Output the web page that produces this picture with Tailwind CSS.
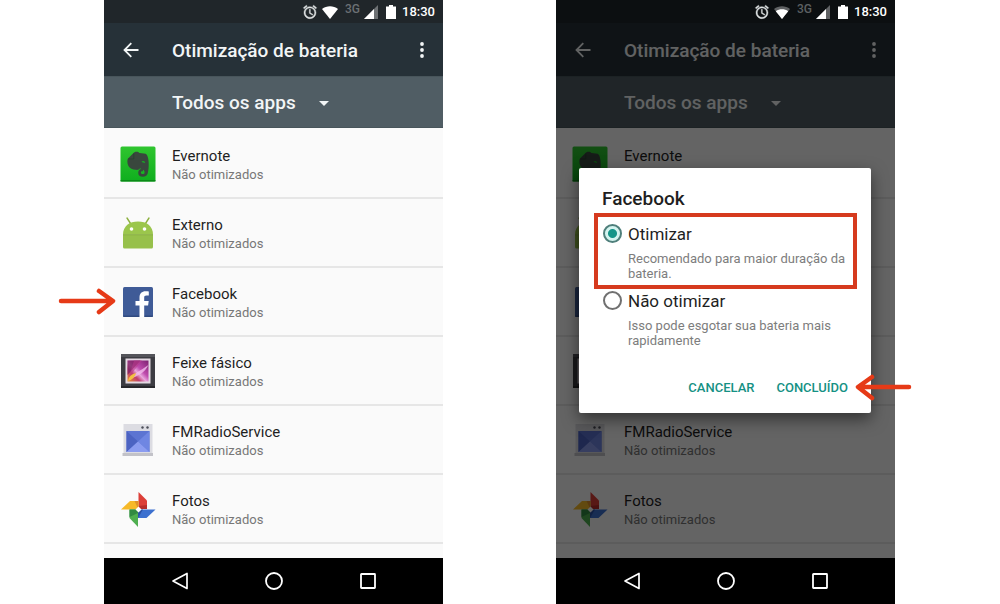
<!DOCTYPE html>
<html lang="pt-BR">
<head>
<meta charset="utf-8">
<meta name="viewport" content="width=device-width, initial-scale=1">
<title>Otimização de bateria</title>
<script src="https://cdn.jsdelivr.net/npm/@tailwindcss/browser@4"></script>
</head>
<body class="bg-white font-['Roboto',sans-serif]">

<!-- Icon library -->
<svg width="0" height="0" class="absolute" aria-hidden="true">
  <defs>
    <linearGradient id="everBg" x1="0" y1="0" x2="0" y2="1"><stop offset="0" stop-color="#2fc52f"/><stop offset="1" stop-color="#0fae1e"/></linearGradient>
    <linearGradient id="photoBg" x1="0" y1="1" x2="1" y2="0"><stop offset="0" stop-color="#e8932e"/><stop offset=".3" stop-color="#c03c6e"/><stop offset=".45" stop-color="#e9a6dc"/><stop offset=".6" stop-color="#c04cae"/><stop offset="1" stop-color="#7c2170"/></linearGradient>
    <symbol id="i-alarm" viewBox="0 0 24 24"><path fill="currentColor" d="M22 5.72l-4.6-3.86-1.29 1.53 4.6 3.86L22 5.72zM7.88 3.39L6.6 1.86 2 5.71l1.29 1.53 4.59-3.85zM12.5 8H11v6l4.75 2.85.75-1.23-4-2.37V8zM12 4c-4.97 0-9 4.03-9 9s4.02 9 9 9a9 9 0 0 0 0-18zm0 16c-3.87 0-7-3.13-7-7s3.13-7 7-7 7 3.13 7 7-3.13 7-7 7z" stroke="currentColor" stroke-width=".6"/></symbol>
    <symbol id="i-wifi" viewBox="0 0 16 13"><path fill="currentColor" d="M0 3C4.500-.6 11.500-.6 16 3L8 13z"/></symbol>
    <symbol id="i-wifi-mid" viewBox="0 0 16 13"><path fill="currentColor" opacity=".35" d="M0 3C4.500-.6 11.500-.6 16 3L8 13z"/><path fill="currentColor" d="M1.800 5.200C5.500 2.600 10.500 2.600 14.200 5.200L8 13z"/></symbol>
    <symbol id="i-signal" viewBox="0 0 14 14"><path fill="currentColor" opacity=".35" d="M14 0V14H0z"/><path fill="currentColor" d="M10 4V14H0z"/></symbol>
    <symbol id="i-battery" viewBox="0 0 10 14"><path fill="currentColor" d="M3 0h4v1.500h3V14H0V1.500h3z"/></symbol>
    <symbol id="i-back" viewBox="0 0 16 16"><path fill="none" stroke="currentColor" stroke-width="1.800" d="M15.500 8H2M8.300 1.200L1.500 8l6.800 6.800"/></symbol>
    <symbol id="i-more" viewBox="0 0 4 16"><g fill="currentColor"><circle cx="2" cy="2" r="1.900"/><circle cx="2" cy="8" r="1.900"/><circle cx="2" cy="14" r="1.900"/></g></symbol>
    <symbol id="n-back" viewBox="0 0 18 18"><path fill="none" stroke="currentColor" stroke-width="1.700" stroke-linejoin="round" d="M16 1.500V16.500L2 9z"/></symbol>
    <symbol id="n-home" viewBox="0 0 18 18"><circle cx="9" cy="9" r="8" fill="none" stroke="currentColor" stroke-width="1.800"/></symbol>
    <symbol id="n-recent" viewBox="0 0 18 18"><rect x="2" y="2" width="14" height="14" rx=".5" fill="none" stroke="currentColor" stroke-width="1.800"/></symbol>

    <symbol id="a-evernote" viewBox="0 0 36 36">
      <rect x=".5" y=".5" width="35" height="35" rx="1.500" fill="url(#everBg)"/>
      <path d="M.5 34h35v1.500H.5z" fill="#0a8a17"/>
      <path fill="#39473d" d="M8 12.500L13.500 7c1.600-1.800 4.600-1.700 6 .1 3 .2 6 .3 7.300 1.700 2.200 3.300 2.600 12.700.9 18.700-.8 2.400-2.500 3.200-4.800 3.200-3.100 0-4.700-1.600-4.700-4 0-2.700 2-4 4.700-3.900v2.500c-1.300-.2-2 .3-2 1.200 0 1.100.8 1.600 1.900 1.600 1.600 0 2-1 1.700-2.600-.5-2-2.800-2-4.500-3.200-.8 1.500-2.300 1.900-4.500 1.500C10 23.200 8 20.500 7.500 17c-.2-2-.2-3.500.5-4.500z"/>
      <path fill="#17ae25" d="M21.500 16c.8-1.700 3.500-1.500 3.700 1-1.400-.6-2.500-.7-3.700-1z"/>
      <path d="M8.300 13h5.500V7.500" fill="none" stroke="#26402d" stroke-width=".8"/>
    </symbol>
    <symbol id="a-android" viewBox="0 0 36 36">
      <path stroke="#8db13f" stroke-width="1.400" stroke-linecap="round" d="M7 3l4.500 7M29 3l-4.500 7"/>
      <path fill="#9bc64c" d="M3 19.500C3 11 9.500 6.500 18 6.500S33 11 33 19.500z"/>
      <path fill="#97c04b" d="M3 19.500h30V32a1.500 1.500 0 0 1-1.500 1.500h-27A1.500 1.500 0 0 1 3 32z"/>
      <path fill="#86ad40" d="M3 19.300h30v1H3z"/>
      <circle cx="11.500" cy="14" r="1.800" fill="#fff"/><circle cx="24.500" cy="14" r="1.800" fill="#fff"/>
    </symbol>
    <symbol id="a-facebook" viewBox="0 0 36 36">
      <rect x="3" y="3" width="30" height="30" rx="1.500" fill="#3f5b97"/>
      <path d="M3 31.500h30v.5a1 1 0 0 1-1 1H4a1 1 0 0 1-1-1z" fill="#304a80"/>
      <path fill="#fff" d="M19.500 33V21.500h-4V17h4v-3.500c0-4 2.400-6.200 6-6.200 1.600 0 2.700.1 3.300.2v4h-2.300c-1.900 0-2.300.9-2.300 2.200V17h4.500l-.6 4.500h-3.900V33z"/>
    </symbol>
    <symbol id="a-gallery" viewBox="0 0 36 36">
      <rect x="1" y="1" width="34" height="34" fill="#3c3c42"/>
      <path d="M1 1h34v3H1z" fill="#54545a"/><path d="M1 33h34v2H1z" fill="#28282c"/>
      <rect x="5.500" y="5.500" width="25" height="25" fill="#e3d9e2"/>
      <rect x="7.500" y="7.500" width="21" height="21" fill="url(#photoBg)"/>
      <path d="M7.500 7.500h13L7.500 22z" fill="#7d2064" opacity=".8"/>
      <path d="M14 7.500h8L9 24z" fill="#b83a8c" opacity=".6"/>
      <path d="M10 26c4-6 10-8 18.500-14-4 8-11 11-18.500 14z" fill="#f3bdec" opacity=".8"/>
      <path d="M8 28c1-5 4-7 8-8-1 4-4 7-8 8z" fill="#f2c043"/>
    </symbol>
    <symbol id="a-radio" viewBox="0 0 36 36">
      <path fill="#dcdce2" d="M3.500 2h29v30h-29z"/><path fill="#c2c2c8" d="M2.500 31h30.500v3H2.500z"/>
      <circle cx="22.500" cy="5.500" r="1.200" fill="#4a4d57"/><circle cx="27.500" cy="5.500" r="1.200" fill="#4a4d57"/>
      <path fill="#5c74d2" d="M6.500 9h23v21h-23z"/><path fill="#4c63c2" d="M6.500 9L18 19.500 6.500 30z"/><path fill="#6f86e2" d="M29.500 9v21L18 19.500z"/><path fill="#8b9cf0" d="M18 19.500L29.500 30h-23z"/>
    </symbol>
    <symbol id="a-photos" viewBox="0 0 36 36">
      <path fill="#dc3f38" d="M18.500 1L27 9.500V18h-8.500z"/><path fill="#b62e2c" d="M18.500 15l8.500-1v4h-8.500z"/>
      <path fill="#f6b928" d="M1 18.500L10 10h8.500v8.500z"/><path fill="#e0902a" d="M14.500 10h4v8.500z"/>
      <path fill="#3c70cf" d="M18 18.500h17.500L26.500 27H18z"/><path fill="#2c52a5" d="M18 18.500h5L18 27z"/>
      <path fill="#4fae50" d="M9.500 18.500H18V36l-8.500-9z"/><path fill="#318a42" d="M9.500 18.500H18V22l-8.500 4z"/>
      <path fill="#fff" d="M18.500 15.500l3 3-3 3-3-3z"/>
    </symbol>
  </defs>
</svg>

<!-- App bar, filter and list shared by both phones -->
<template id="app-screen">
  <header class="flex h-[53px] shrink-0 items-center bg-[#263138] pr-[19px] pl-[19px] text-[#f2f5f6]">
    <button type="button" aria-label="Voltar" class="flex w-[49px]"><svg class="size-4"><use href="#i-back"/></svg></button>
    <h1 class="flex-1 pt-[2px] text-[19px] leading-6 font-medium whitespace-nowrap">Otimização de bateria</h1>
    <button type="button" aria-label="Mais opções" class="flex"><svg class="h-4 w-1"><use href="#i-more"/></svg></button>
  </header>
  <div class="flex h-[52px] shrink-0 items-center border-y border-[#48555b] bg-[#505d64] pt-[2px] pl-[68px] text-[#f2f5f6]">
    <div class="relative flex items-center">
      <select aria-label="Filtro" class="h-8 w-[160px] appearance-none bg-transparent text-[19px] leading-8 font-medium outline-none"><option>Todos os apps</option></select>
      <svg class="pointer-events-none absolute right-[3px] h-[5px] w-[10px]" viewBox="0 0 10 5"><path fill="currentColor" d="M0 0h10L5 5z"/></svg>
    </div>
  </div>
  <ul class="min-h-0 flex-1 overflow-hidden bg-[#fafafa] pt-[2px]">
    <li class="flex h-[69px] items-center gap-4 border-b-2 border-[#e6e6e6] px-4"><svg class="size-9 shrink-0"><use href="#a-evernote"/></svg><div class="pt-[2px]"><h2 class="text-[15px] leading-5 text-[#1f1f1f]">Evernote</h2><p class="text-[13px] leading-[18px] text-[#777]">Não otimizados</p></div></li>
    <li class="flex h-[69px] items-center gap-4 border-b-2 border-[#e6e6e6] px-4"><svg class="size-9 shrink-0"><use href="#a-android"/></svg><div class="pt-[2px]"><h2 class="text-[15px] leading-5 text-[#1f1f1f]">Externo</h2><p class="text-[13px] leading-[18px] text-[#777]">Não otimizados</p></div></li>
    <li class="flex h-[69px] items-center gap-4 border-b-2 border-[#e6e6e6] px-4"><svg class="size-9 shrink-0"><use href="#a-facebook"/></svg><div class="pt-[2px]"><h2 class="text-[15px] leading-5 text-[#1f1f1f]">Facebook</h2><p class="text-[13px] leading-[18px] text-[#777]">Não otimizados</p></div></li>
    <li class="flex h-[69px] items-center gap-4 border-b-2 border-[#e6e6e6] px-4"><svg class="size-9 shrink-0"><use href="#a-gallery"/></svg><div class="pt-[2px]"><h2 class="text-[15px] leading-5 text-[#1f1f1f]">Feixe fásico</h2><p class="text-[13px] leading-[18px] text-[#777]">Não otimizados</p></div></li>
    <li class="flex h-[69px] items-center gap-4 border-b-2 border-[#e6e6e6] px-4"><svg class="size-9 shrink-0"><use href="#a-radio"/></svg><div class="pt-[2px]"><h2 class="text-[15px] leading-5 text-[#1f1f1f]">FMRadioService</h2><p class="text-[13px] leading-[18px] text-[#777]">Não otimizados</p></div></li>
    <li class="flex h-[69px] items-center gap-4 border-b-2 border-[#e6e6e6] px-4"><svg class="size-9 shrink-0"><use href="#a-photos"/></svg><div class="pt-[2px]"><h2 class="text-[15px] leading-5 text-[#1f1f1f]">Fotos</h2><p class="text-[13px] leading-[18px] text-[#777]">Não otimizados</p></div></li>
  </ul>
</template>

<template id="nav-bar">
  <nav aria-label="Sistema" class="flex h-[46px] shrink-0 items-center justify-center gap-[76px] bg-black text-white">
    <button type="button" aria-label="Voltar" class="flex"><svg class="size-[18px]"><use href="#n-back"/></svg></button>
    <button type="button" aria-label="Início" class="flex"><svg class="size-[18px]"><use href="#n-home"/></svg></button>
    <button type="button" aria-label="Recentes" class="flex"><svg class="size-[18px]"><use href="#n-recent"/></svg></button>
  </nav>
</template>

<main class="flex h-screen gap-[113px] pr-[105px] pl-[104px]">
  <section class="relative flex min-w-0 flex-1 flex-col" aria-label="Lista de apps">
    <div class="flex h-[23px] shrink-0 items-center justify-end gap-2 bg-[#20262a] pt-px pr-2 text-white">
      <svg class="size-4 shrink-0 text-[#dfe2e3]"><use href="#i-alarm"/></svg>
      <svg class="-ml-1 h-[13px] w-4 shrink-0"><use href="#i-wifi"/></svg>
      <span class="-ml-px pb-[6px] text-[12px] leading-3 font-medium text-[#6b7074]">3G</span>
      <svg class="-ml-1 size-[14px] shrink-0"><use href="#i-signal"/></svg>
      <svg class="h-[14px] w-[10px] shrink-0"><use href="#i-battery"/></svg>
      <time class="-ml-0.5 text-[13px] leading-4 font-medium">18:30</time>
    </div>
    <div data-slot="app-screen" class="flex min-h-0 flex-1 flex-col"></div>
    <div data-slot="nav-bar"></div>
    <svg class="absolute top-[287px] -left-[46px] h-7 w-[60px]" viewBox="0 0 60 28" aria-hidden="true"><path fill="none" stroke="#e63a17" stroke-width="4.500" stroke-linecap="round" stroke-linejoin="round" d="M3 14H54M41 4L55 14L41 25"/></svg>
  </section>

  <section class="relative flex min-w-0 flex-1 flex-col" aria-label="Diálogo do Facebook">
    <div class="flex h-[23px] shrink-0 items-center justify-end gap-2 bg-[#0c0f11] pt-px pr-2 text-white">
      <svg class="size-4 shrink-0 text-[#dfe2e3]"><use href="#i-alarm"/></svg>
      <svg class="-ml-1 h-[13px] w-4 shrink-0"><use href="#i-wifi-mid"/></svg>
      <span class="-ml-px pb-[6px] text-[12px] leading-3 font-medium text-[#5c6062]">3G</span>
      <svg class="-ml-1 size-[14px] shrink-0"><use href="#i-signal"/></svg>
      <svg class="h-[14px] w-[10px] shrink-0"><use href="#i-battery"/></svg>
      <time class="-ml-0.5 text-[13px] leading-4 font-medium">18:30</time>
    </div>
    <div class="relative flex min-h-0 flex-1 flex-col">
      <div data-slot="app-screen" class="flex min-h-0 flex-1 flex-col" inert></div>
      <div class="absolute inset-0 flex items-center bg-black/60 pr-6 pl-[23px]">
        <form role="dialog" aria-labelledby="dlg-title" class="flex-1 rounded-xs bg-white px-[15px] pt-[19px] pb-[13px] shadow-[0_6px_16px_rgba(0,0,0,0.5)]">
          <h2 id="dlg-title" class="pl-2 text-[19px] leading-6 font-medium text-[#1f1f1f]">Facebook</h2>
          <label class="mt-[2px] -mr-[1px] grid h-[76px] grid-cols-[20px_1fr] content-start gap-x-[5px] border-4 border-[#d63a1e] pt-[7px] pl-[5px]">
            <input type="radio" name="mode" checked class="size-[19px] appearance-none rounded-full border-2 border-[#4f7f7b] bg-[radial-gradient(circle,#159588_4px,#d4f4f0_5px)]">
            <span class="text-[17px] leading-5 text-[#1f1f1f]">Otimizar</span>
            <span class="col-start-2 mt-[7px] text-[13px] leading-[15px] text-[#7d7d7d]">Recomendado para maior duração da bateria.</span>
          </label>
          <label class="grid grid-cols-[20px_1fr] gap-x-[5px] pt-[2px] pl-[9px]">
            <input type="radio" name="mode" class="size-[19px] appearance-none rounded-full border-2 border-[#707070]">
            <span class="text-[17px] leading-5 text-[#1f1f1f]">Não otimizar</span>
            <span class="col-start-2 mt-[7px] pr-5 text-[13px] leading-[15px] text-[#7d7d7d]">Isso pode esgotar sua bateria mais rapidamente</span>
          </label>
          <div class="mt-7 flex justify-end gap-[22px] pr-2 text-[13px] leading-6 font-medium text-[#159184]">
            <button type="button">CANCELAR</button>
            <button type="submit">CONCLUÍDO</button>
          </div>
        </form>
      </div>
    </div>
    <div data-slot="nav-bar"></div>
    <svg class="absolute top-[373px] -right-[18px] h-7 w-[60px]" viewBox="0 0 60 28" aria-hidden="true"><path fill="none" stroke="#e63a17" stroke-width="4.500" stroke-linecap="round" stroke-linejoin="round" d="M56 14H6M19 4L5 14L19 25"/></svg>
  </section>
</main>

<script>
  document.querySelectorAll('[data-slot]').forEach(function (slot) {
    slot.appendChild(document.getElementById(slot.dataset.slot).content.cloneNode(true));
  });
  document.querySelector('form').addEventListener('submit', function (e) { e.preventDefault(); });
</script>
</body>
</html>
